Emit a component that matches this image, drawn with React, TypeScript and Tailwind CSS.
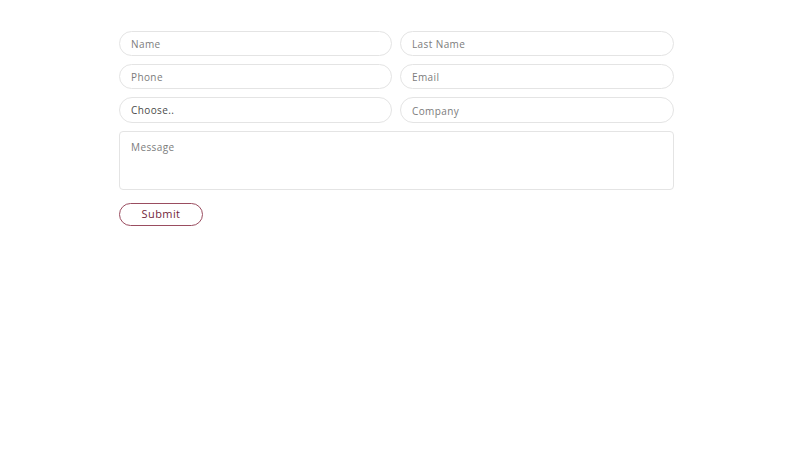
import React from "react";

const inputCls =
  "h-[25px] w-full rounded-full border border-[#e4e4e4] bg-white px-[11px] pt-[1px] text-[10px] tracking-[0.4px] text-[#6f6f6f] placeholder:text-[#7c7c7c] outline-none";

export default function App() {
  return (
    <div className="min-h-[450px] w-full bg-white" style={{ fontFamily: '"Open Sans", "Noto Sans", sans-serif' }}>
      <form className="ml-[119px] w-[555px] pt-[31px]" onSubmit={(e) => e.preventDefault()}>
        <div className="grid grid-cols-[273px_274px] gap-x-[8px] gap-y-[8px]">
          <input className={inputCls} placeholder="Name" />
          <input className={inputCls} placeholder="Last Name" />
          <input className={inputCls} placeholder="Phone" />
          <input className={inputCls} placeholder="Email" />
          <div className="flex h-[26px] w-full items-center rounded-full border border-[#e4e4e4] bg-white px-[11px] pt-[1px] text-[10px] tracking-[0.4px] text-[#4a4a4a]">
            Choose..
          </div>
          <input className={inputCls + " h-[26px]"} placeholder="Company" />
        </div>
        <textarea
          className="mt-[8px] block h-[59px] w-full resize-none rounded-[4px] border border-[#e4e4e4] bg-white px-[11px] pt-[8px] text-[10px] tracking-[0.4px] text-[#6f6f6f] placeholder:text-[#7c7c7c] outline-none"
          placeholder="Message"
        />
        <button
          type="submit"
          className="mt-[13px] flex h-[23px] w-[84px] items-center justify-center rounded-full border border-[#9a4d60] bg-white text-[11px] font-medium tracking-[0.4px] text-[#73263b]"
        >
          Submit
        </button>
      </form>
    </div>
  );
}
